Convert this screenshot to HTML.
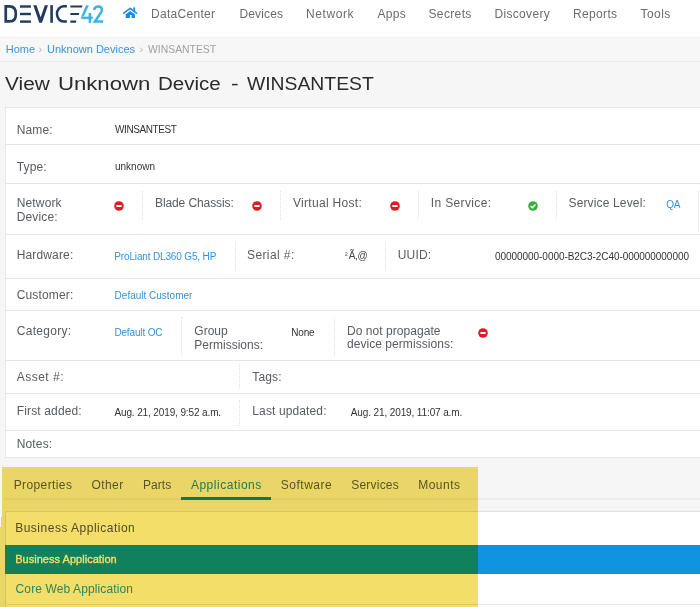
<!DOCTYPE html>
<html><head><meta charset="utf-8">
<style>
*{margin:0;padding:0;box-sizing:border-box}
html,body{width:700px;height:607px;overflow:hidden}
body{position:relative;background:#f6f6f6;font-family:"Liberation Sans",sans-serif;}
.a{position:absolute;white-space:nowrap;line-height:1}
#hdr{position:absolute;left:0;top:0;width:700px;height:37px;background:#fff}
.nav{font-size:12px;color:#6c6c6c;top:8px}
#bc{position:absolute;left:0;top:37px;width:700px;height:25px;background:#f7f7f7;border-top:1px solid #f2f2f2;border-bottom:1px solid #ebebeb}
.bc{font-size:11px;top:43.6px;color:#3d91dc}
.sep{color:#b5b5b5}
.tt{font-size:18px;top:74.5px;color:#2b2b2b;transform-origin:0 0}
#card{position:absolute;left:5px;top:107px;width:720px;height:351px;background:#fff;border:1px solid #e8e8e8}
.hl{position:absolute;left:5px;width:700px;height:1px;background:#e6e6e6}
.lb{font-size:12px;color:#585b60;letter-spacing:0.15px}
.v{font-size:10px;color:#333}
.lk{font-size:10px;color:#3492dc}
.vs{position:absolute;width:1px;border-left:1px dotted #e0e0e0}
.ic{position:absolute;width:10px;height:10px}
.tab{font-size:12px;color:#5e5e5e;top:478.9px}
</style></head><body>
<div id="hdr"></div>
<!-- logo -->
<svg class="a" style="left:0;top:0" width="110" height="30" viewBox="0 0 110 30">
 <g fill="none" stroke="#213c5d" stroke-width="2.5">
  <path d="M5.75 6.45H9.6C14 6.45 15.85 9.4 15.85 13.95C15.85 18.5 14 21.45 9.6 21.45H5.75Z" stroke-width="2.7"/>
  <path d="M66.9 6.35H63.6A6.65 7.6 0 0 0 63.6 21.55H66.9"/>
 </g>
 <g fill="#213c5d">
  <rect x="20" y="5.3" width="10.9" height="2.4"/>
  <rect x="20" y="12.8" width="10.9" height="2.4"/>
  <rect x="20" y="20.4" width="10.9" height="2.4"/>
  <path d="M33.3 5.2H36.5L40.65 17.3L44.8 5.2H48L42 22.7H39.3z"/>
  <rect x="50.3" y="5.1" width="2.6" height="17.7"/>
  <path d="M70.4 5.45h12.2l-.7 2.15H70.4z"/>
  <path d="M70.4 12.95h9l-.7 2.15h-8.3z"/>
  <path d="M70.4 20.45h6.1l-.7 2.35h-5.4z"/>
 </g>
 <g fill="#38b4e6">
  <path d="M86.1 5.3h2.8l-5.1 11.3h-2.6z"/>
  <rect x="81.2" y="16.6" width="11.6" height="2.3"/>
  <rect x="88.6" y="13" width="2.6" height="9.8"/>
 </g>
 <path d="M94.1 9.9C94.4 7.6 96.2 6.45 98.4 6.45C100.6 6.45 101.9 8 101.9 10C101.9 11.4 101.3 12.4 100.3 13.6L94.9 21.55H103.2" fill="none" stroke="#38b4e6" stroke-width="2.5"/>
</svg>
<!-- home icon -->
<svg class="a" style="left:120px;top:4px" width="20" height="18" viewBox="0 0 20 18">
 <path d="M3.7 9.1L10.2 4.4L16.5 9.1" fill="none" stroke="#1b8be6" stroke-width="1.6" stroke-linecap="round" stroke-linejoin="round"/>
 <rect x="13.3" y="3.4" width="1.7" height="3.6" fill="#1b8be6"/>
 <path d="M5.7 10.3L10.2 6.9L14.9 10.3V13.9H11.6V10.9H9.9V13.9H5.7z" fill="#1b8be6"/>
</svg>
<div class="a nav" style="left:151px;letter-spacing:0.3px">DataCenter</div>
<div class="a nav" style="left:239.5px;letter-spacing:0.13px">Devices</div>
<div class="a nav" style="left:306px;letter-spacing:0.6px">Network</div>
<div class="a nav" style="left:377.5px;letter-spacing:0.3px">Apps</div>
<div class="a nav" style="left:428.5px;letter-spacing:0.36px">Secrets</div>
<div class="a nav" style="left:494.5px;letter-spacing:0.32px">Discovery</div>
<div class="a nav" style="left:573px;letter-spacing:0.34px">Reports</div>
<div class="a nav" style="left:640.5px;letter-spacing:0.45px">Tools</div>

<div id="bc"></div>
<div class="a bc" style="left:5.8px">Home</div>
<div class="a bc sep" style="left:38.6px">›</div>
<div class="a bc" style="left:47px">Unknown Devices</div>
<div class="a bc sep" style="left:139.4px">›</div>
<div class="a bc" style="left:148px;color:#a0a0a0;font-size:10.4px;top:44.6px">WINSANTEST</div>

<div class="a tt" style="left:5.1px;transform:scaleX(1.156)">View</div>
<div class="a tt" style="left:58px;transform:scaleX(1.23)">Unknown</div>
<div class="a tt" style="left:158px;transform:scaleX(1.14)">Device</div>
<div class="a tt" style="left:230.6px;transform:scaleX(1.27)">-</div>
<div class="a tt" style="left:247px;transform:scaleX(1.074)">WINSANTEST</div>

<div id="card"></div>
<div class="hl" style="top:144px"></div>
<div class="hl" style="top:183px"></div>
<div class="hl" style="top:234px"></div>
<div class="hl" style="top:278px"></div>
<div class="hl" style="top:310px"></div>
<div class="hl" style="top:360px"></div>
<div class="hl" style="top:393px"></div>
<div class="hl" style="top:430px"></div>

<!-- row 1 -->
<div class="a lb" style="left:16.7px;top:123.9px">Name:</div>
<div class="a v" style="left:115px;top:124.8px;letter-spacing:-0.4px">WINSANTEST</div>
<!-- row 2 -->
<div class="a lb" style="left:16.7px;top:161.4px">Type:</div>
<div class="a v" style="left:115px;top:162.3px">unknown</div>
<!-- row 3 -->
<div class="a lb" style="left:16.7px;top:197.3px;line-height:13.8px">Network<br>Device:</div>
<svg class="ic" style="left:114px;top:200.8px" viewBox="0 0 10 10"><circle cx="5" cy="5" r="4.8" fill="#de1c23"/><rect x="2.4" y="4" width="5.2" height="2" fill="#fff"/></svg>
<div class="vs" style="left:142px;top:191px;height:29px"></div>
<div class="a lb" style="left:155px;top:197.3px;letter-spacing:-0.1px">Blade Chassis:</div>
<svg class="ic" style="left:252px;top:200.8px" viewBox="0 0 10 10"><circle cx="5" cy="5" r="4.8" fill="#de1c23"/><rect x="2.4" y="4" width="5.2" height="2" fill="#fff"/></svg>
<div class="vs" style="left:280px;top:191px;height:29px"></div>
<div class="a lb" style="left:293px;top:197.3px;letter-spacing:0.3px">Virtual Host:</div>
<svg class="ic" style="left:390px;top:200.8px" viewBox="0 0 10 10"><circle cx="5" cy="5" r="4.8" fill="#de1c23"/><rect x="2.4" y="4" width="5.2" height="2" fill="#fff"/></svg>
<div class="vs" style="left:418px;top:191px;height:29px"></div>
<div class="a lb" style="left:430.8px;top:197.3px;letter-spacing:0.35px">In Service:</div>
<svg class="ic" style="left:528px;top:200.8px" viewBox="0 0 10 10"><circle cx="5" cy="5" r="4.8" fill="#3aae42"/><path d="M2.6 5.1l1.7 1.7 3.2-3.3" stroke="#fff" stroke-width="1.5" fill="none"/></svg>
<div class="vs" style="left:556px;top:191px;height:29px"></div>
<div class="a lb" style="left:568.5px;top:197.3px">Service Level:</div>
<div class="a lk" style="left:666.3px;top:200px;letter-spacing:-0.4px">QA</div>
<div class="vs" style="left:698px;top:191px;height:41px"></div>
<!-- row 4 -->
<div class="a lb" style="left:16.7px;top:248.5px">Hardware:</div>
<div class="a lk" style="left:114.3px;top:252.0px;letter-spacing:-0.15px">ProLiant DL360 G5, HP</div>
<div class="vs" style="left:235px;top:242px;height:29px"></div>
<div class="a lb" style="left:247px;top:249px;letter-spacing:0.4px">Serial #:</div>
<div class="a v" style="left:345px;top:251.5px;font-size:8px;color:#444">²</div>
<div class="a v" style="left:348.7px;top:251.2px;color:#444">Ã‚@</div>
<div class="vs" style="left:385px;top:242px;height:29px"></div>
<div class="a lb" style="left:397.7px;top:249px;letter-spacing:0.2px">UUID:</div>
<div class="a v" style="left:495px;top:251.7px;letter-spacing:-0.05px">00000000-0000-B2C3-2C40-000000000000</div>
<!-- row 5 -->
<div class="a lb" style="left:16.7px;top:289.3px">Customer:</div>
<div class="a lk" style="left:114.6px;top:290.5px">Default Customer</div>
<!-- row 6 -->
<div class="a lb" style="left:16.7px;top:325.2px;letter-spacing:0.3px">Category:</div>
<div class="a lk" style="left:114.4px;top:328.0px;letter-spacing:-0.15px">Default OC</div>
<div class="vs" style="left:181px;top:317px;height:38px"></div>
<div class="a lb" style="left:194.3px;top:325.3px;line-height:13.2px;letter-spacing:0px">Group<br>Permissions:</div>
<div class="a v" style="left:291.3px;top:327.8px;letter-spacing:-0.2px">None</div>
<div class="vs" style="left:333.5px;top:318px;height:37px"></div>
<div class="a lb" style="left:347px;top:324.5px;line-height:13.2px;letter-spacing:0.05px">Do not propagate<br>device permissions:</div>
<svg class="ic" style="left:478px;top:327.7px" viewBox="0 0 10 10"><circle cx="5" cy="5" r="4.8" fill="#de1c23"/><rect x="2.4" y="4" width="5.2" height="2" fill="#fff"/></svg>
<!-- row 7 -->
<div class="a lb" style="left:16.7px;top:371.4px;letter-spacing:0.5px">Asset #:</div>
<div class="vs" style="left:239px;top:364px;height:25px"></div>
<div class="a lb" style="left:252.3px;top:371.4px">Tags:</div>
<!-- row 8 -->
<div class="a lb" style="left:16.7px;top:404.6px">First added:</div>
<div class="a v" style="left:114.4px;top:407.7px;letter-spacing:-0.12px">Aug. 21, 2019, 9:52 a.m.</div>
<div class="vs" style="left:239px;top:400px;height:26px"></div>
<div class="a lb" style="left:252.3px;top:404.6px;letter-spacing:0.12px">Last updated:</div>
<div class="a v" style="left:350.8px;top:407.9px;letter-spacing:-0.12px">Aug. 21, 2019, 11:07 a.m.</div>
<!-- row 9 -->
<div class="a lb" style="left:16.7px;top:438.4px">Notes:</div>

<!-- tabs -->
<div style="position:absolute;left:5px;top:498px;width:700px;height:2px;background:#ececec"></div>
<div class="a tab" style="left:13.7px;letter-spacing:0.39px">Properties</div>
<div class="a tab" style="left:91.4px;letter-spacing:0.46px">Other</div>
<div class="a tab" style="left:142.9px;letter-spacing:0.1px">Parts</div>
<div class="a tab" style="left:190.9px;letter-spacing:0.52px;color:#1e8fdb">Applications</div>
<div style="position:absolute;left:181px;top:497px;width:90px;height:3px;background:#0f8ad6"></div>
<div class="a tab" style="left:280.8px;letter-spacing:0.5px">Software</div>
<div class="a tab" style="left:351.2px;letter-spacing:0.22px">Services</div>
<div class="a tab" style="left:418.2px;letter-spacing:0.5px">Mounts</div>

<div style="position:absolute;left:5px;top:511px;width:720px;height:120px;background:#fff;border:1px solid #e0e0e0;border-radius:2px"></div>
<div class="a" style="left:15.2px;top:521.9px;font-size:12px;color:#555;letter-spacing:0.5px">Business Application</div>
<div style="position:absolute;left:5px;top:545px;width:700px;height:29px;background:#1194e0"></div>
<div class="a" style="left:15.2px;top:553.6px;font-size:11px;color:#fff;letter-spacing:0.03px;-webkit-text-stroke:0.35px #fff">Business Application</div>
<div class="a" style="left:15.6px;top:582.6px;font-size:12px;color:#2f9ae0;letter-spacing:0.11px">Core Web Application</div>
<div style="position:absolute;left:5px;top:604px;width:700px;height:1px;background:#e8e8e8"></div>

<!-- highlighter overlay -->
<div style="position:absolute;left:2px;top:467px;width:476px;height:50px;background:#f3de6a;mix-blend-mode:multiply"></div>
<div style="position:absolute;left:1px;top:517px;width:477px;height:10px;background:#f3de6a;mix-blend-mode:multiply"></div>
<div style="position:absolute;left:0px;top:527px;width:478px;height:80px;background:#f3de6a;mix-blend-mode:multiply"></div>
</body></html>
